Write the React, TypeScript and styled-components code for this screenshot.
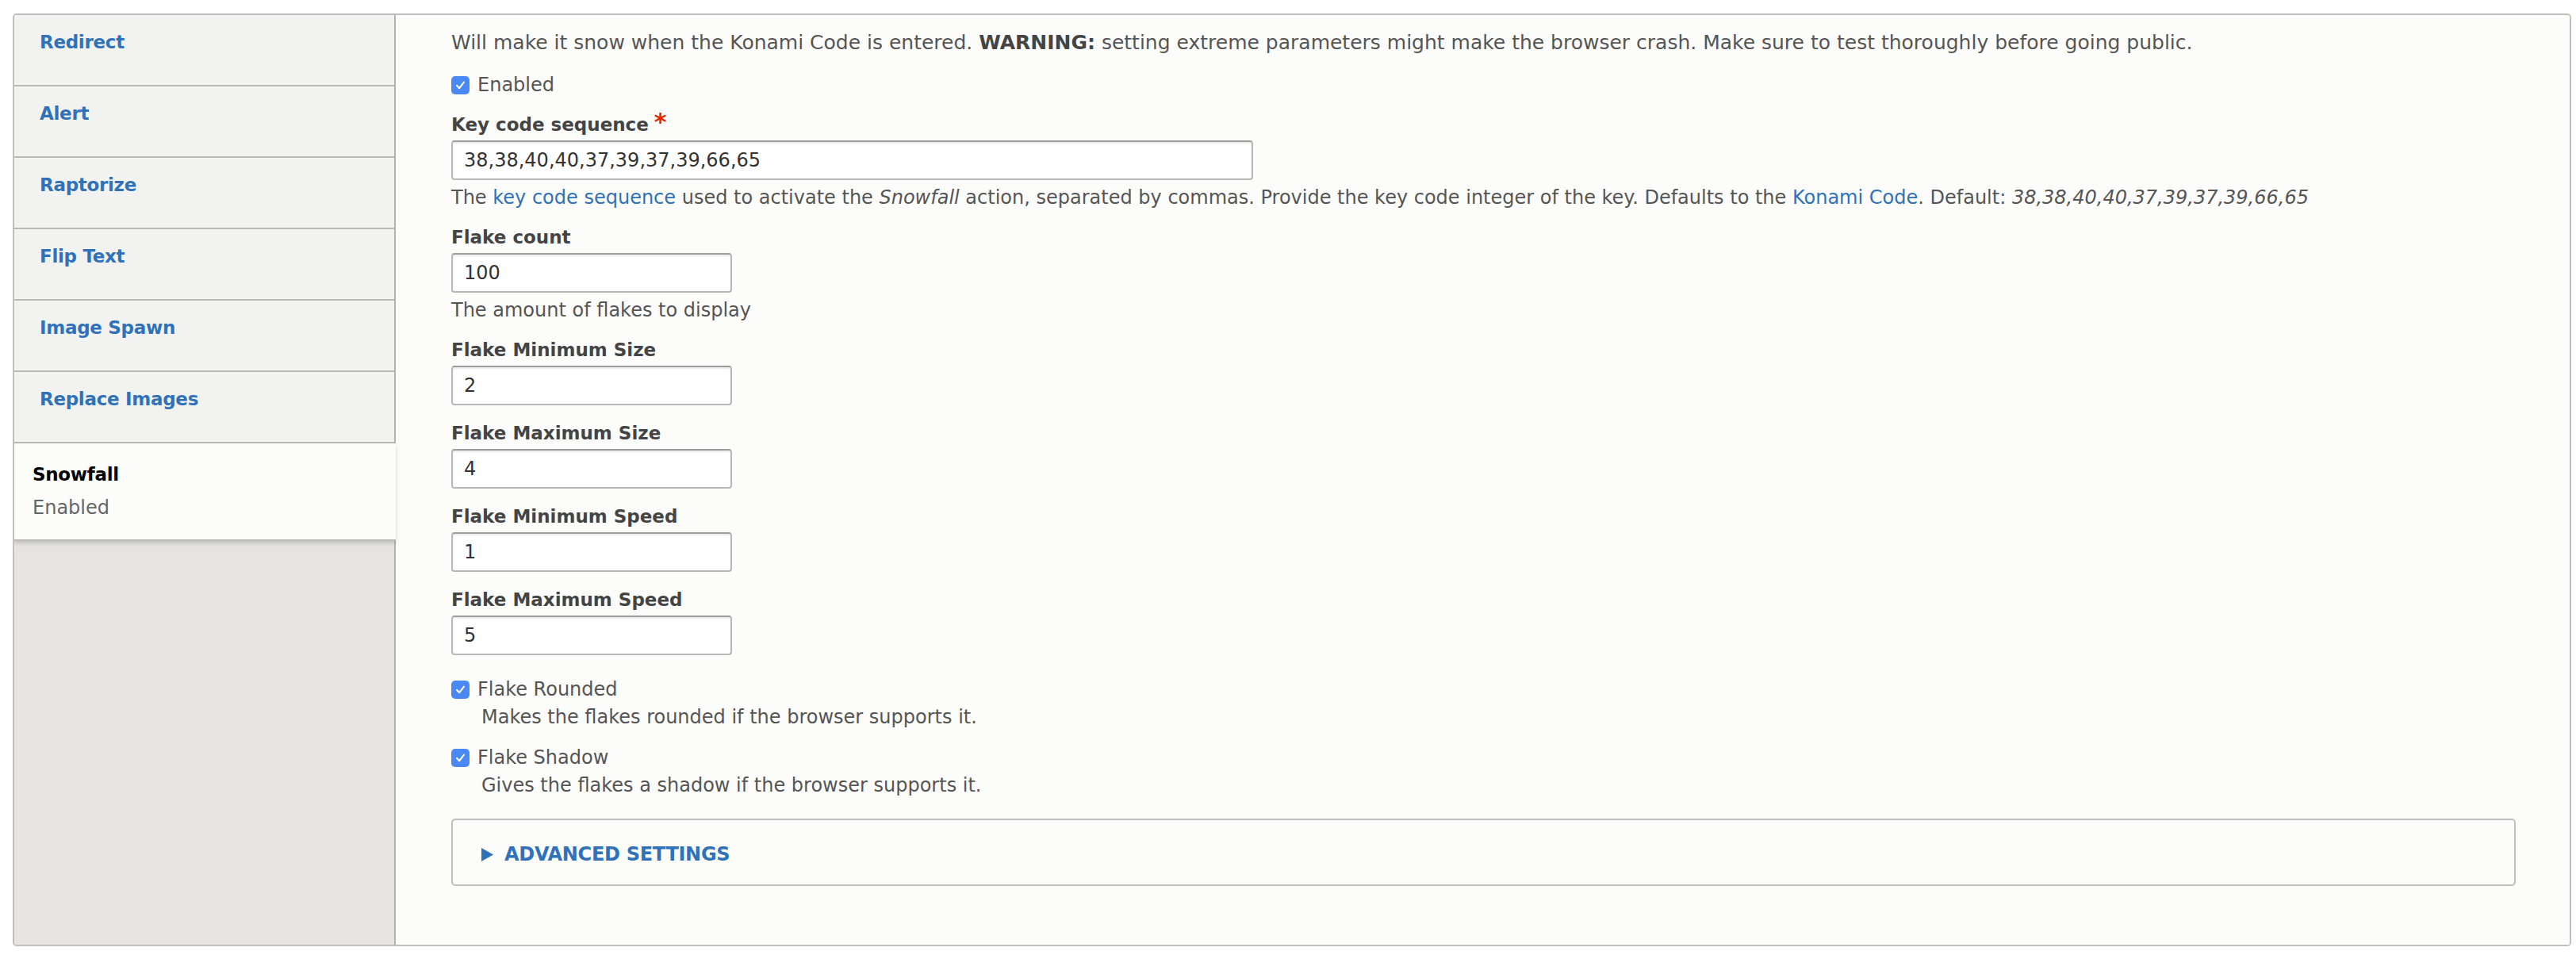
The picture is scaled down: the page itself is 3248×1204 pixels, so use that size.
import React from 'react';
import styled, { createGlobalStyle } from 'styled-components';

const GlobalStyle = createGlobalStyle`
  html, body {
    margin: 0;
    padding: 0;
    background: #ffffff;
  }
  body {
    font-family: "DejaVu Sans", "Liberation Sans", sans-serif;
    color: #333;
  }
`;

const Page = styled.div`
  padding: 17px 6px 11px 16px;
`;

const VerticalTabs = styled.div`
  display: flex;
  border: 2px solid #bfbfbf;
  border-radius: 5px;
  overflow: hidden;
  background: #fcfcfa;
`;

const TabMenu = styled.ul`
  list-style: none;
  margin: 0;
  padding: 0;
  width: 479px;
  flex-shrink: 0;
  background: #e5e4e0;
  border-right: 2px solid #b3b3b3;
`;

const TabItem = styled.li<{ $active?: boolean }>`
  position: relative;
  background: ${({ $active }) => ($active ? '#fcfcfa' : '#f2f2f0')};
  border-bottom: 2px solid #b9b9b9;
  padding: ${({ $active }) => ($active ? '23px 20px 24px 23px' : '18px 32px 38px')};
  margin-right: ${({ $active }) => ($active ? '-2px' : '0')};
  box-shadow: ${({ $active }) => ($active ? '0 3px 5px rgba(0, 0, 0, 0.16)' : 'none')};
  z-index: ${({ $active }) => ($active ? 1 : 0)};
`;

const TabTitle = styled.a<{ $active?: boolean }>`
  display: block;
  font-size: 23px;
  line-height: 32px;
  font-weight: bold;
  letter-spacing: -0.3px;
  color: ${({ $active }) => ($active ? '#000' : '#2f72b9')};
  text-decoration: none;
`;

const TabSummary = styled.span`
  display: block;
  margin-top: 10px;
  font-size: 24px;
  line-height: 32px;
  color: #666;
`;

const Pane = styled.div`
  flex: 1;
  min-width: 0;
  padding: 20px 68px 74px 70px;
  background: #fcfcfa;
`;

const Intro = styled.p`
  margin: 0;
  font-size: 25px;
  line-height: 30px;
  color: #555;
  white-space: nowrap;

  strong {
    color: #444;
  }
`;

const CheckItem = styled.div<{ $gap?: number }>`
  margin-top: ${({ $gap }) => $gap ?? 23}px;
`;

const CheckRow = styled.label`
  display: flex;
  align-items: center;
  gap: 10px;
  height: 30px;
  font-size: 24px;
  color: #555;
`;

const CheckBox = styled.span`
  display: inline-flex;
  align-items: center;
  justify-content: center;
  width: 23px;
  height: 23px;
  border-radius: 5px;
  background: #4a89f3;
  flex-shrink: 0;
`;

const FormItem = styled.div`
  margin-top: 20px;
`;

const Label = styled.label`
  display: block;
  font-size: 23px;
  line-height: 30px;
  font-weight: bold;
  color: #444;
  margin-bottom: 5px;
`;

const Required = styled.span`
  display: inline-block;
  margin-left: 7px;
  color: #e32700;
  font-size: 30px;
  line-height: 20px;
  vertical-align: top;
  position: relative;
  top: 2px;
`;

const TextInput = styled.input<{ $wide?: boolean }>`
  display: block;
  box-sizing: border-box;
  width: ${({ $wide }) => ($wide ? '1011px' : '354px')};
  height: 50px;
  padding: 0 14px;
  font-family: "DejaVu Sans", sans-serif;
  font-size: 24px;
  color: #333;
  background: #fff;
  border: 2px solid #b8b8b8;
  border-top-color: #9c9c9c;
  border-radius: 4px;
  box-shadow: inset 0 2px 2px rgba(0, 0, 0, 0.08);
  outline: none;
`;

const Description = styled.div<{ $indent?: boolean }>`
  margin-top: ${({ $indent }) => ($indent ? '5px' : '7px')};
  padding-left: ${({ $indent }) => ($indent ? '38px' : '0')};
  font-size: 24px;
  line-height: 30px;
  color: #555;
  white-space: nowrap;

  a {
    color: #2f72b9;
    text-decoration: none;
  }
`;

const Details = styled.div`
  margin-top: 27px;
  border: 2px solid #bfbfbf;
  border-radius: 5px;
  padding: 28px 36px 23px;
`;

const Summary = styled.div`
  display: flex;
  align-items: center;
  gap: 14px;
  height: 30px;
  font-size: 24px;
  font-weight: bold;
  letter-spacing: -0.3px;
  text-transform: uppercase;
  color: #2f72b9;
`;

const tabs = ['Redirect', 'Alert', 'Raptorize', 'Flip Text', 'Image Spawn', 'Replace Images'];

const fields = [
  { label: 'Flake Minimum Size', value: '2' },
  { label: 'Flake Maximum Size', value: '4' },
  { label: 'Flake Minimum Speed', value: '1' },
  { label: 'Flake Maximum Speed', value: '5' },
];

const Check = () => (
  <CheckBox>
    <svg width="15" height="15" viewBox="0 0 15 15">
      <path d="M3 7.8 L6.2 11.2 L12 3.6" fill="none" stroke="#fff" strokeWidth="2" strokeLinecap="round" strokeLinejoin="round" />
    </svg>
  </CheckBox>
);

const App: React.FC = () => {
  return (
    <Page>
      <GlobalStyle />
      <VerticalTabs>
        <TabMenu>
          {tabs.map((t) => (
            <TabItem key={t}>
              <TabTitle href="#">{t}</TabTitle>
            </TabItem>
          ))}
          <TabItem $active>
            <TabTitle $active href="#">Snowfall</TabTitle>
            <TabSummary>Enabled</TabSummary>
          </TabItem>
        </TabMenu>

        <Pane>
          <Intro>
            Will make it snow when the Konami Code is entered. <strong>WARNING:</strong> setting extreme
            parameters might make the browser crash. Make sure to test thoroughly before going public.
          </Intro>

          <CheckItem>
            <CheckRow>
              <Check />
              Enabled
            </CheckRow>
          </CheckItem>

          <FormItem>
            <Label>
              Key code sequence<Required>*</Required>
            </Label>
            <TextInput $wide defaultValue="38,38,40,40,37,39,37,39,66,65" />
            <Description>
              The <a href="#">key code sequence</a> used to activate the <em>Snowfall</em> action, separated by
              commas. Provide the key code integer of the key. Defaults to the <a href="#">Konami Code</a>.
              Default: <em>38,38,40,40,37,39,37,39,66,65</em>
            </Description>
          </FormItem>

          <FormItem>
            <Label>Flake count</Label>
            <TextInput defaultValue="100" />
            <Description>The amount of flakes to display</Description>
          </FormItem>

          {fields.map((f) => (
            <FormItem key={f.label}>
              <Label>{f.label}</Label>
              <TextInput defaultValue={f.value} />
            </FormItem>
          ))}

          <CheckItem $gap={28}>
            <CheckRow>
              <Check />
              Flake Rounded
            </CheckRow>
            <Description $indent>Makes the flakes rounded if the browser supports it.</Description>
          </CheckItem>

          <CheckItem $gap={21}>
            <CheckRow>
              <Check />
              Flake Shadow
            </CheckRow>
            <Description $indent>Gives the flakes a shadow if the browser supports it.</Description>
          </CheckItem>

          <Details>
            <Summary>
              <svg width="15" height="17" viewBox="0 0 15 17">
                <path d="M0 0 L15 8.5 L0 17 Z" fill="#2f72b9" />
              </svg>
              Advanced settings
            </Summary>
          </Details>
        </Pane>
      </VerticalTabs>
    </Page>
  );
};

export default App;
